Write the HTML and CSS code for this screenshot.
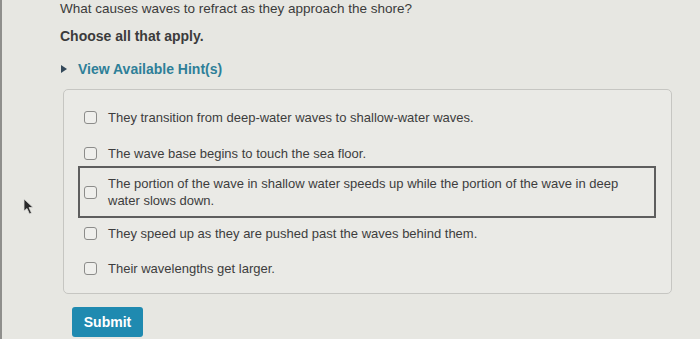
FILE: index.html
```html
<!DOCTYPE html>
<html>
<head>
<meta charset="utf-8">
<link rel="stylesheet" href="styles.css">
</head>
<body>
<div class="page">
  <p class="question">What causes waves to refract as they approach the shore?</p>
  <p class="choose">Choose all that apply.</p>
  <div class="hint"><span class="tri"></span>View Available Hint(s)</div>
  <div class="box">
    <label class="opt o1"><span class="cb"></span><span class="txt">They transition from deep-water waves to shallow-water waves.</span></label>
    <label class="opt o2"><span class="cb"></span><span class="txt">The wave base begins to touch the sea floor.</span></label>
    <label class="opt o3 selected"><span class="cb"></span><span class="txt">The portion of the wave in shallow water speeds up while the portion of the wave in deep water slows down.</span></label>
    <label class="opt o4"><span class="cb"></span><span class="txt">They speed up as they are pushed past the waves behind them.</span></label>
    <label class="opt o5"><span class="cb"></span><span class="txt">Their wavelengths get larger.</span></label>
  </div>
  <button class="submit">Submit</button>
  <svg class="cursor" width="12" height="17" viewBox="0 0 12 17"><path d="M1 1 L1 13 L4 10.5 L6.5 16 L8.5 15 L6 9.5 L10 9.5 Z" fill="#2a2a2a" stroke="#dcdcd8" stroke-width="0.8"/></svg>
</div>
</body>
</html>
```
FILE: styles.css
```css
html, body {
  margin: 0;
  padding: 0;
  background: #e7e7e2;
}
.page {
  position: relative;
  width: 698px;
  height: 339px;
  border-left: 2px solid #8f8f8c;
  padding-left: 58px;
  box-sizing: border-box;
  font-family: "Liberation Sans", Arial, sans-serif;
  color: #3b3b3b;
  display: flex;
  flex-direction: column;
  align-items: flex-start;
  overflow: hidden;
}
.question {
  margin: 0;
  font-size: 13.5px;
  line-height: 18px;
}
.choose {
  margin: 9px 0 0;
  font-size: 14px;
  line-height: 18px;
  font-weight: bold;
}
.hint {
  margin-top: 15px;
  display: flex;
  align-items: center;
  font-size: 14px;
  line-height: 18px;
  font-weight: bold;
  color: #2e7f98;
}
.tri {
  width: 0;
  height: 0;
  border-top: 4.5px solid transparent;
  border-bottom: 4.5px solid transparent;
  border-left: 6px solid #34495a;
  margin: 0 11px 0 1px;
}
.box {
  margin: 11px 0 0 3px;
  width: 609px;
  box-sizing: border-box;
  border: 1px solid #c6c6c2;
  border-radius: 5px;
  background: #eaeae6;
  padding: 17px 0 14px;
  display: flex;
  flex-direction: column;
}
.opt {
  display: flex;
  align-items: center;
  gap: 11px;
  margin: 0 15px 0 14px;
  padding: 0 4px;
  border: 2px solid transparent;
  font-size: 13px;
  line-height: 17px;
  color: #3d3d3d;
}
.cb {
  flex: none;
  width: 11px;
  height: 11px;
  border: 1.5px solid #8c8c8a;
  border-radius: 3px;
  background: #efefec;
}
.o2 { margin-top: 15px; }
.o3 { margin-top: 2px; }
.o4 { margin-top: 5px; }
.o5 { margin-top: 14px; }
.selected {
  border-color: #5e5e5e;
  padding-top: 7px;
  padding-bottom: 7px;
}
.submit {
  margin: 13px 0 0 12px;
  width: 71px;
  height: 30px;
  border: none;
  border-radius: 3px;
  background: #1f8ab0;
  color: #ffffff;
  font-family: "Liberation Sans", Arial, sans-serif;
  font-size: 14px;
  font-weight: bold;
  padding: 0;
}
.cursor {
  position: absolute;
  left: 21px;
  top: 198px;
}
```
